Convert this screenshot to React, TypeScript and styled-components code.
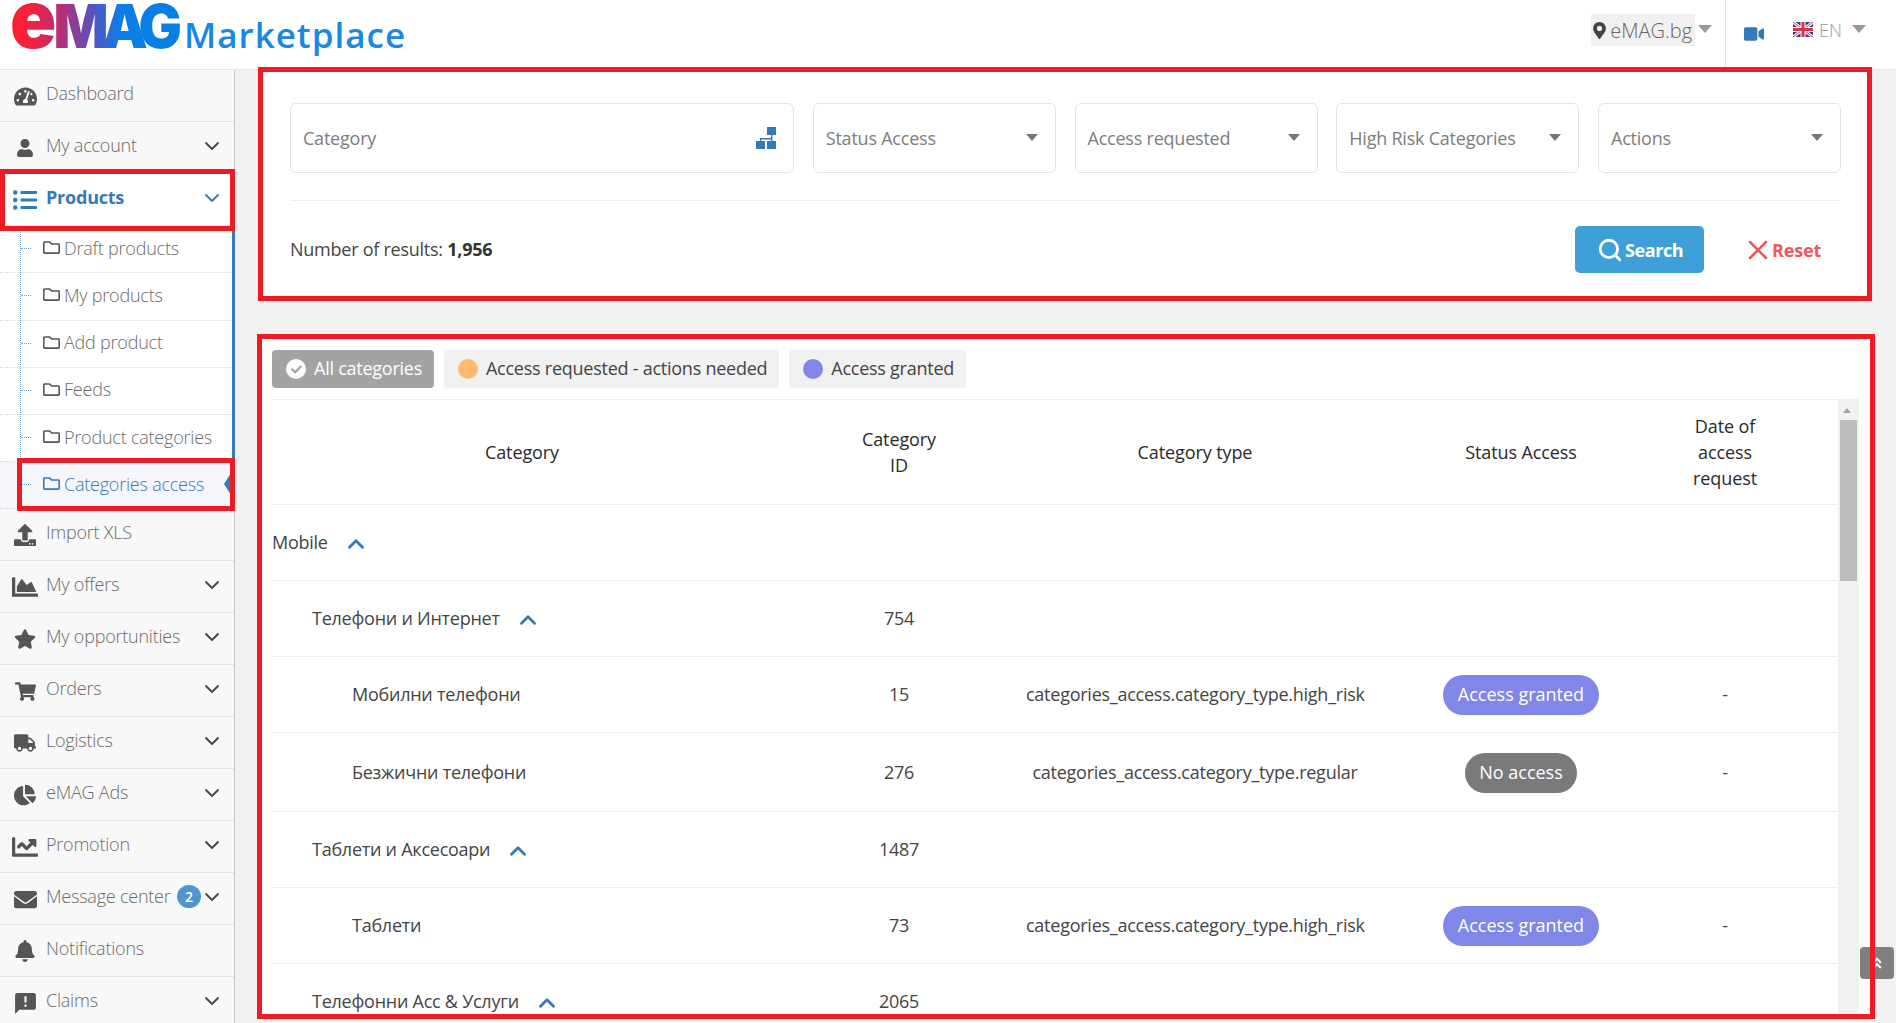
import React from 'react';
import styled, { createGlobalStyle } from 'styled-components';
import { ChevronDown, ChevronUp, Search as SearchIcon, X } from 'lucide-react';
import {
  FaTachometerAlt, FaUser, FaListUl, FaRegFolder, FaUpload, FaChartArea, FaStar, FaShoppingCart,
  FaTruck, FaChartPie, FaChartLine, FaEnvelope, FaBell, FaVideo, FaMapMarkerAlt, FaCheck,
  FaAngleDoubleUp,
} from 'react-icons/fa';
import { MdAnnouncement } from 'react-icons/md';

const Global = createGlobalStyle`
  html, body { margin: 0; padding: 0; height: 100%; overflow: hidden; background: #fff; }
  body { font-family: "Open Sans", "Liberation Sans", sans-serif; font-size: 18px; color: #444; }
  * { box-sizing: border-box; }
`;

const RED = '#ed1c24';

const Page = styled.div`
  height: 100vh;
  display: flex;
  flex-direction: column;
  overflow: hidden;
`;

const Header = styled.header`
  height: 70px;
  flex: none;
  display: flex;
  justify-content: space-between;
  background: #fff;
  border-bottom: 1px solid #e4e4e4;
`;

const Logo = styled.div`
  display: flex;
  align-items: baseline;
  padding-left: 10px;
  height: 96px;
  margin-top: -26px;
`;

const LogoMark = styled.span`
  display: inline-block;
  width: 180px;
  height: 90px;
  margin-right: -9px;
  white-space: nowrap;
  font-family: "Inter", "Liberation Sans", sans-serif;
  font-weight: 900;
  font-size: 61px;
  line-height: 90px;
  letter-spacing: -7px;
  color: transparent;
  background: linear-gradient(90deg, #ff1f2d 0%, #f4213f 13%, #ad3180 32%, #4f56c6 50%, #0a7de6 65%, #067fe6 100%);
  -webkit-background-clip: text;
  background-clip: text;
  transform: scaleX(0.945);
  transform-origin: left center;
`;

const LogoE = styled.span`
  font-size: 81px;
  letter-spacing: -3px;
`;

const LogoWord = styled.span`
  margin-left: 3px;
  font-weight: 600;
  font-size: 35px;
  letter-spacing: 1px;
  color: #1a88e2;
  line-height: 49px;
`;

const HeaderRight = styled.div`
  display: flex;
  align-items: stretch;
  padding-right: 30px;
`;

const Store = styled.div`
  display: flex;
  align-items: center;
  gap: 3px;
  padding-right: 13px;
  border-right: 1px solid #e4e4e4;
  height: 70px;
  padding-bottom: 10px;
`;

const StoreName = styled.span`
  display: inline-flex;
  align-items: center;
  gap: 4px;
  height: 32px;
  padding: 0 3px 0 2px;
  background: #f1f1f1;
  color: #666;
  font-size: 20px;
  font-weight: 300;
  white-space: nowrap;
  svg { color: #444; margin: 0 -2px; }
`;

const TopCaret = styled.span`
  width: 0;
  height: 0;
  border-left: 7px solid transparent;
  border-right: 7px solid transparent;
  border-top: 8px solid #999;
  margin-top: -2px;
`;

const VideoLink = styled.span`
  display: flex;
  align-items: center;
  color: #337ab7;
  padding: 0 29px 2px 18px;
`;

const Lang = styled.div`
  display: flex;
  align-items: center;
  padding-bottom: 10px;
  color: #999;
  font-size: 18px;
  font-weight: 300;
  gap: 6px;
`;

const LangCaret = styled(TopCaret)`
  margin-left: 4px;
`;

const Content = styled.div`
  flex: 1;
  min-height: 0;
  display: flex;
`;

const Sidebar = styled.nav`
  width: 235px;
  flex: none;
  background: #f8f8f8;
  border-right: 1px solid #c8c8c8;
`;

const Row = styled.div<{ $active?: boolean }>`
  position: relative;
  height: 52px;
  display: flex;
  align-items: center;
  border-bottom: 1px solid #e4e4e4;
  background: ${p => (p.$active ? '#fff' : 'transparent')};
  color: ${p => (p.$active ? '#337ab7' : '#6b6b6b')};
  font-weight: ${p => (p.$active ? 700 : 300)};
  ${p =>
    p.$active &&
    `&::after {
      content: '';
      position: absolute;
      left: 0; right: -1px; top: -5px; bottom: -6px;
      border: 5px solid ${RED};
      z-index: 4;
    }`}
`;

const RowIcon = styled.span<{ $active?: boolean }>`
  width: 26px;
  margin-left: 12px;
  margin-right: 8px;
  display: flex;
  justify-content: center;
  align-items: center;
  flex: none;
  padding-top: 1px;
  color: ${p => (p.$active ? '#337ab7' : '#555')};
`;

const RowLabel = styled.span`
  flex: 1;
  font-size: 18px;
  white-space: nowrap;
  padding-bottom: 6px;
  letter-spacing: -0.22px;
`;

const RowBadge = styled.span`
  position: absolute;
  left: 177px;
  top: 12px;
  width: 24px;
  height: 23px;
  border-radius: 50%;
  background: #5195d0;
  color: #fff;
  font-size: 14px;
  font-weight: 600;
  display: flex;
  align-items: center;
  justify-content: center;
`;

const RowChevron = styled.span<{ $active?: boolean }>`
  width: 24px;
  height: 24px;
  margin-right: 10px;
  color: ${p => (p.$active ? '#337ab7' : '#444')};
  flex: none;
  margin-top: -3px;
`;

const SubMenu = styled.div`
  position: relative;
  background: #fff;
  border-right: 3px solid #337ab7;
  margin-right: -1px;
  height: 283px;
  &::before {
    content: '';
    position: absolute;
    left: 20px;
    top: 0;
    bottom: 24px;
    border-left: 1px dotted #6aa3d6;
  }
`;

const SubRow = styled.div<{ $active?: boolean }>`
  position: relative;
  height: ${p => (p.$active ? 46.75 : 47.25)}px;
  display: flex;
  align-items: center;
  gap: 4px;
  padding-left: 43px;
  padding-bottom: 3px;
  border-bottom: 1px dotted #d4d4d4;
  font-weight: 300;
  background: ${p => (p.$active ? '#f4f6fb' : 'transparent')};
  color: ${p => (p.$active ? '#337ab7' : '#6b6b6b')};
  svg { color: ${p => (p.$active ? '#337ab7' : '#555')}; flex: none; }
  &::before {
    content: '';
    position: absolute;
    left: 21px;
    width: 10px;
    top: 22px;
    border-top: 1px dotted #6aa3d6;
  }
  ${p =>
    p.$active &&
    `&::after {
      content: '';
      position: absolute;
      left: 17px; right: -3px; top: -4px; bottom: -3px;
      border: 5px solid ${RED};
      z-index: 4;
    }`}
`;

const ActiveArrow = styled.span`
  position: absolute;
  right: 1px;
  top: 11px;
  width: 0;
  height: 0;
  border-top: 11px solid transparent;
  border-bottom: 11px solid transparent;
  border-right: 7px solid #337ab7;
`;

const SubLabel = styled.span`
  font-size: 18px;
  letter-spacing: -0.22px;
  white-space: nowrap;
`;

const Main = styled.main`
  flex: 1;
  min-width: 0;
  position: relative;
  background: #f1f1f1;
  display: flex;
  flex-direction: column;
`;

const Panel = styled.section<{ $left: number; $right: number; $top: number; $bottom: number; $grow?: boolean }>`
  position: relative;
  background: #fff;
  margin: ${p => `${p.$top}px ${p.$right}px ${p.$bottom}px ${p.$left}px`};
  flex: ${p => (p.$grow ? '1 1 0' : 'none')};
  min-height: 0;
  display: flex;
  flex-direction: column;
  &::after {
    content: '';
    position: absolute;
    inset: -5px;
    border: 5px solid ${RED};
    z-index: 4;
    pointer-events: none;
  }
`;

const FilterBody = styled.div`
  padding: 31px 26px 23px 27px;
`;

const FilterRow = styled.div`
  display: flex;
  gap: 18.75px;
  padding-bottom: 27px;
  border-bottom: 1px solid #eeeeee;
`;

const Field = styled.div<{ $wide?: boolean }>`
  height: 70px;
  flex: ${p => (p.$wide ? '1' : 'none')};
  width: ${p => (p.$wide ? 'auto' : '243px')};
  border: 1px solid #e3e3e3;
  border-radius: 6px;
  display: flex;
  align-items: center;
  justify-content: space-between;
  padding: 0 17px 0 12px;
  color: #7d7d7d;
  font-size: 18px;
  letter-spacing: -0.22px;
  white-space: nowrap;
`;

const FieldCaret = styled.span`
  width: 0;
  height: 0;
  border-left: 6px solid transparent;
  border-right: 6px solid transparent;
  border-top: 7px solid #777;
  margin-top: -2px;
`;

const FilterFoot = styled.div`
  display: flex;
  align-items: center;
  justify-content: space-between;
  padding-top: 25px;
  padding-right: 20px;
`;

const Results = styled.div`
  font-size: 18px;
  letter-spacing: -0.25px;
  color: #444;
  padding-bottom: 2px;
  b { font-weight: 700; color: #333; }
`;

const FootActions = styled.div`
  display: flex;
  align-items: center;
  gap: 46px;
`;

const SearchButton = styled.button`
  width: 129px;
  height: 47px;
  border: 0;
  padding: 0 0 0 4px;
  border-radius: 5px;
  background: #3e9fd9;
  color: #fff;
  font: 700 18px "Open Sans", sans-serif;
  letter-spacing: -0.4px;
  display: flex;
  align-items: center;
  justify-content: center;
  gap: 5px;
  svg { margin: 0 -3px; flex: none; }
`;

const ResetButton = styled.span`
  display: flex;
  align-items: center;
  gap: 6px;
  color: #f25757;
  font-size: 18px;
  font-weight: 700;
  letter-spacing: -0.2px;
  svg { margin: -8px; flex: none; }
`;

const ResetLabel = styled.span`
  margin-left: 0;
`;

const Tabs = styled.div`
  display: flex;
  gap: 10px;
  padding: 11px 0 11px 10px;
`;

const Tab = styled.div<{ $on?: boolean }>`
  height: 38px;
  display: flex;
  align-items: center;
  gap: 8px;
  padding: 0 12px 2px 14px;
  border-radius: 4px;
  background: ${p => (p.$on ? '#a3a3a3' : '#f1f1f1')};
  color: ${p => (p.$on ? '#fff' : '#444')};
  font-size: 18px;
  letter-spacing: -0.25px;
  white-space: nowrap;
`;

const Dot = styled.span<{ $c: string }>`
  width: 20px;
  height: 20px;
  margin-top: 2px;
  border-radius: 50%;
  background: ${p => p.$c};
  display: flex;
  align-items: center;
  justify-content: center;
  color: #a3a3a3;
  flex: none;
`;

const TableArea = styled.div`
  flex: 1;
  min-height: 0;
  display: flex;
  padding: 0 11px 0 10px;
  overflow: hidden;
`;

const Table = styled.div`
  flex: 1;
  min-width: 0;
  border-top: 1px solid #eeeeee;
`;

const TR = styled.div<{ $h: number }>`
  display: grid;
  grid-template-columns: 500px 254px 338px 314px 94px 1fr;
  height: ${p => p.$h}px;
  border-bottom: 1px solid #eeeeee;
  align-items: center;
`;

const TH = styled.div`
  text-align: center;
  color: #2a2a2a;
  font-size: 18px;
  line-height: 26px;
  letter-spacing: -0.1px;
  padding-bottom: 1px;
`;

const NameCell = styled.div<{ $level: number }>`
  display: flex;
  align-items: center;
  padding-left: ${p => p.$level * 40}px;
  font-size: 18px;
  letter-spacing: -0.25px;
  color: #444;
  padding-bottom: 1px;
`;

const TD = styled.div`
  text-align: center;
  font-size: 18px;
  letter-spacing: -0.25px;
  color: #444;
  padding-bottom: 1px;
  white-space: nowrap;
`;

const PillCell = styled.div`
  display: flex;
  justify-content: center;
  padding-top: 1px;
`;

const Expand = styled.span`
  display: inline-flex;
  margin: 3px 0 0 15px;
  color: #337ab7;
  height: 26px;
`;

const Pill = styled.span<{ $grey?: boolean }>`
  display: inline-block;
  height: 40px;
  line-height: 38px;
  padding: 0 14.5px;
  border-radius: 20px;
  background: ${p => (p.$grey ? '#7a7a7a' : '#8187e8')};
  color: #fff;
  font-size: 18px;
  white-space: nowrap;
`;

const ScrollTrack = styled.div`
  position: relative;
  width: 21px;
  flex: none;
  background: #f1f1f1;
`;

const ScrollArrow = styled.span`
  position: absolute;
  left: 5px;
  top: 9px;
  width: 0;
  height: 0;
  border-left: 4.5px solid transparent;
  border-right: 4.5px solid transparent;
  border-bottom: 5px solid #a3a3a3;
`;

const ScrollThumb = styled.span`
  position: absolute;
  left: 2px;
  right: 2px;
  top: 21px;
  height: 161px;
  background: #bdbdbd;
`;

const ToTop = styled.span`
  position: absolute;
  left: 1625px;
  top: 877px;
  width: 34px;
  height: 32px;
  z-index: 2;
  border-radius: 4px;
  background: #7f7f7f;
  color: #fff;
  display: flex;
  align-items: center;
  justify-content: center;
`;

const Ic = (C: React.ComponentType<{ size?: number }>, size: number) => <C size={size} />;

const menuBefore = [
  { label: 'Dashboard', icon: Ic(FaTachometerAlt, 23) },
  { label: 'My account', icon: Ic(FaUser, 18), chev: true },
];
const subItems = ['Draft products', 'My products', 'Add product', 'Feeds', 'Product categories', 'Categories access'];
const menuAfter = [
  { label: 'Import XLS', icon: Ic(FaUpload, 22) },
  { label: 'My offers', icon: Ic(FaChartArea, 26), chev: true },
  { label: 'My opportunities', icon: Ic(FaStar, 22), chev: true },
  { label: 'Orders', icon: Ic(FaShoppingCart, 21), chev: true },
  { label: 'Logistics', icon: Ic(FaTruck, 22), chev: true },
  { label: 'eMAG Ads', icon: Ic(FaChartPie, 22), chev: true },
  { label: 'Promotion', icon: Ic(FaChartLine, 26), chev: true },
  { label: 'Message center', icon: Ic(FaEnvelope, 23), chev: true, badge: '2' },
  { label: 'Notifications', icon: Ic(FaBell, 22) },
  { label: 'Claims', icon: <MdAnnouncement size={25} />, chev: true },
];

type MenuItem = { label: string; icon: React.ReactNode; chev?: boolean; badge?: string };

const MenuRow = ({ item }: { item: MenuItem }) => (
  <Row>
    <RowIcon>{item.icon}</RowIcon>
    <RowLabel>{item.label}</RowLabel>
    {item.badge && <RowBadge>{item.badge}</RowBadge>}
    {item.chev && (
      <RowChevron>
        <ChevronDown size={24} strokeWidth={1.8} />
      </RowChevron>
    )}
  </Row>
);

const UkFlag = () => (
  <svg width="20" height="15" viewBox="0 0 20 15">
    <rect width="20" height="15" fill="#2b3f86" />
    <path d="M0 0L20 15M20 0L0 15" stroke="#fff" strokeWidth="3" />
    <path d="M0 0L20 15M20 0L0 15" stroke="#d8324a" strokeWidth="1" />
    <path d="M10 0V15M0 7.5H20" stroke="#fff" strokeWidth="5" />
    <path d="M10 0V15M0 7.5H20" stroke="#d8324a" strokeWidth="3" />
  </svg>
);

const TreeIcon = () => (
  <svg width="20" height="22" viewBox="0 0 20 22" fill="#337ab7">
    <rect x="11" y="0" width="9" height="8" />
    <rect x="0" y="14" width="9" height="8" />
    <rect x="11" y="14" width="9" height="8" />
    <path d="M15 8h1.4v6H15zM4 11h12v1.4H5.4V14H4z" />
  </svg>
);

const Up = () => (
  <Expand>
    <ChevronUp size={26} strokeWidth={2.6} />
  </Expand>
);

export default function App() {
  return (
    <Page>
      <Global />
      <Header>
        <Logo>
          <LogoMark>
            <LogoE>e</LogoE>MAG
          </LogoMark>
          <LogoWord>Marketplace</LogoWord>
        </Logo>
        <HeaderRight>
          <Store>
            <StoreName>
              <FaMapMarkerAlt size={17} />
              eMAG.bg
            </StoreName>
            <TopCaret />
          </Store>
          <VideoLink>
            <FaVideo size={20} />
          </VideoLink>
          <Lang>
            <UkFlag />
            EN
            <LangCaret />
          </Lang>
        </HeaderRight>
      </Header>
      <Content>
        <Sidebar>
          {menuBefore.map(m => (
            <MenuRow key={m.label} item={m} />
          ))}
          <Row $active>
            <RowIcon $active>
              <FaListUl size={24} />
            </RowIcon>
            <RowLabel>Products</RowLabel>
            <RowChevron $active>
              <ChevronDown size={24} strokeWidth={1.8} />
            </RowChevron>
          </Row>
          <SubMenu>
            {subItems.map((s, i) => {
              const active = i === subItems.length - 1;
              return (
                <SubRow key={s} $active={active}>
                  <FaRegFolder size={17} />
                  <SubLabel>{s}</SubLabel>
                  {active && <ActiveArrow />}
                </SubRow>
              );
            })}
          </SubMenu>
          {menuAfter.map(m => (
            <MenuRow key={m.label} item={m} />
          ))}
        </Sidebar>
        <Main>
          <ToTop>
            <FaAngleDoubleUp size={14} />
          </ToTop>
          <Panel $left={28} $right={29} $top={2} $bottom={0}>
            <FilterBody>
              <FilterRow>
                <Field $wide>
                  Category
                  <TreeIcon />
                </Field>
                {['Status Access', 'Access requested', 'High Risk Categories', 'Actions'].map(f => (
                  <Field key={f}>
                    {f}
                    <FieldCaret />
                  </Field>
                ))}
              </FilterRow>
              <FilterFoot>
                <Results>
                  Number of results: <b>1,956</b>
                </Results>
                <FootActions>
                  <SearchButton>
                    <SearchIcon size={26} strokeWidth={2.6} />
                    Search
                  </SearchButton>
                  <ResetButton>
                    <X size={32} strokeWidth={1.9} />
                    <ResetLabel>Reset</ResetLabel>
                  </ResetButton>
                </FootActions>
              </FilterFoot>
            </FilterBody>
          </Panel>
          <Panel $left={27} $right={26} $top={43} $bottom={9} $grow>
            <Tabs>
              <Tab $on>
                <Dot $c="#fff">
                  <FaCheck size={11} />
                </Dot>
                All categories
              </Tab>
              <Tab>
                <Dot $c="#ffbb6b" />
                Access requested - actions needed
              </Tab>
              <Tab>
                <Dot $c="#8187e8" />
                Access granted
              </Tab>
            </Tabs>
            <TableArea>
              <Table>
                <TR $h={105}>
                  <TH>Category</TH>
                  <TH>
                    Category
                    <br />
                    ID
                  </TH>
                  <TH>Category type</TH>
                  <TH>Status Access</TH>
                  <TH>Date of access request</TH>
                </TR>
                <TR $h={76}>
                  <NameCell $level={0}>
                    Mobile
                    <Up />
                  </NameCell>
                </TR>
                <TR $h={76}>
                  <NameCell $level={1}>
                    Телефони и Интернет
                    <Up />
                  </NameCell>
                  <TD>754</TD>
                </TR>
                <TR $h={76}>
                  <NameCell $level={2}>Мобилни телефони</NameCell>
                  <TD>15</TD>
                  <TD>categories_access.category_type.high_risk</TD>
                  <PillCell>
                    <Pill>Access granted</Pill>
                  </PillCell>
                  <TD>-</TD>
                </TR>
                <TR $h={79}>
                  <NameCell $level={2}>Безжични телефони</NameCell>
                  <TD>276</TD>
                  <TD>categories_access.category_type.regular</TD>
                  <PillCell>
                    <Pill $grey>No access</Pill>
                  </PillCell>
                  <TD>-</TD>
                </TR>
                <TR $h={76}>
                  <NameCell $level={1}>
                    Таблети и Аксесоари
                    <Up />
                  </NameCell>
                  <TD>1487</TD>
                </TR>
                <TR $h={76}>
                  <NameCell $level={2}>Таблети</NameCell>
                  <TD>73</TD>
                  <TD>categories_access.category_type.high_risk</TD>
                  <PillCell>
                    <Pill>Access granted</Pill>
                  </PillCell>
                  <TD>-</TD>
                </TR>
                <TR $h={76}>
                  <NameCell $level={1}>
                    Телефонни Асс &amp; Услуги
                    <Up />
                  </NameCell>
                  <TD>2065</TD>
                </TR>
              </Table>
              <ScrollTrack>
                <ScrollArrow />
                <ScrollThumb />
              </ScrollTrack>
            </TableArea>
          </Panel>
        </Main>
      </Content>
    </Page>
  );
}
